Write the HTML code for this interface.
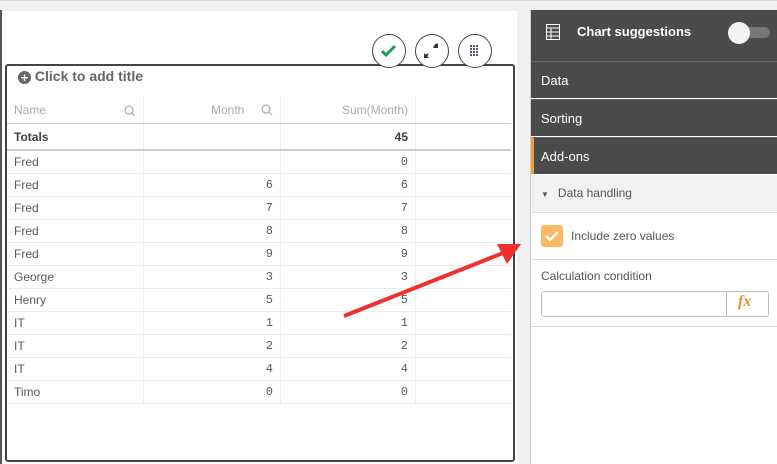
<!DOCTYPE html><html><head><style>
body{margin:0;width:777px;height:464px;overflow:hidden;background:#fff;font-family:"Liberation Sans",sans-serif;position:relative}
.a{position:absolute}
table{border-collapse:collapse;font-size:12px;color:#595959}
td{height:22px;border-bottom:1px solid #ececec;border-right:1px solid #ececec;padding:0 7px}
.n{text-align:right;font-family:"Liberation Mono",monospace;}
.nav{position:absolute;left:531px;width:246px;height:37px;border-top:1px solid #666;color:#fff;font-size:13px;line-height:37px;padding-left:10px;box-sizing:border-box;background:#4b4b4b}
.circ{position:absolute;top:34px;width:34px;height:34px;border:1.5px solid #444;border-radius:50%;background:#fff;box-sizing:border-box}
.mg{float:right;margin-top:2px}
</style></head><body>
<div class="a" style="left:0;top:0;width:777px;height:10px;background:#f0f0f0;border-top:1px solid #ddd"></div>
<div class="a" style="left:0;top:10px;width:2px;height:454px;background:#555"></div>
<div class="a" style="left:517px;top:10px;width:14px;height:454px;background:#f0f0f0"></div>
<div class="a" style="left:5px;top:64px;width:510px;height:398px;border:2px solid #444;border-radius:3px;box-sizing:border-box"></div>
<div class="a" style="left:18px;top:68px;font-size:14px;font-weight:bold;color:#666"><span style="display:inline-block;width:13px;height:13px;border-radius:50%;background:#666;color:#fff;text-align:center;line-height:13px;font-size:13px;vertical-align:-1px">+</span> Click to add title</div>
<div class="circ" style="left:372px"><svg width="31" height="31" viewBox="0 0 31 31"><path d="M9 16l4 4 9-9" stroke="#1a9e4a" stroke-width="3" fill="none"/></svg></div>
<div class="circ" style="left:415px"><svg width="31" height="31" viewBox="0 0 31 31"><path d="M12 19l-3 3M18 12l3-3" stroke="#333" stroke-width="2"/><path d="M8 18v5h5zM22 8v5h-5z" fill="#333"/></svg></div>
<div class="circ" style="left:458px"><svg width="31" height="31" viewBox="0 0 31 31" fill="#557"><g id="r"><rect x="11" y="10" width="2" height="2"/><rect x="14" y="10" width="2" height="2"/><rect x="17" y="10" width="2" height="2"/></g><use href="#r" y="3"/><use href="#r" y="6"/><use href="#r" y="9"/></svg></div>
<table class="a" style="left:7px;top:97px;width:504px">
<tr style="color:#aaa"><td style="width:122px;height:26px;border-bottom:1px solid #ccc">Name <svg class="mg" width="12" height="12"><circle cx="5" cy="5" r="4" stroke="#aaa" fill="none" stroke-width="1.2"/><path d="M8 8l3 3" stroke="#aaa" stroke-width="1.2"/></svg></td><td style="width:122px;text-align:right;border-bottom:1px solid #ccc">Month &nbsp;&nbsp;&nbsp; <svg width="12" height="12" style="vertical-align:-2px"><circle cx="5" cy="5" r="4" stroke="#aaa" fill="none" stroke-width="1.2"/><path d="M8 8l3 3" stroke="#aaa" stroke-width="1.2"/></svg></td><td style="width:120px;text-align:right;border-bottom:1px solid #ccc">Sum(Month)</td><td style="border-right:none;border-bottom:1px solid #ccc"></td></tr>
<tr style="font-weight:bold;color:#404040"><td style="height:25px;border-bottom:2px solid #ccc">Totals</td><td style="border-bottom:2px solid #ccc"></td><td style="text-align:right;border-bottom:2px solid #ccc">45</td><td style="border-right:none;border-bottom:2px solid #ccc"></td></tr>
<tr><td>Fred</td><td class="n"></td><td class="n">0</td><td style="border-right:none"></td></tr>
<tr><td>Fred</td><td class="n">6</td><td class="n">6</td><td style="border-right:none"></td></tr>
<tr><td>Fred</td><td class="n">7</td><td class="n">7</td><td style="border-right:none"></td></tr>
<tr><td>Fred</td><td class="n">8</td><td class="n">8</td><td style="border-right:none"></td></tr>
<tr><td>Fred</td><td class="n">9</td><td class="n">9</td><td style="border-right:none"></td></tr>
<tr><td>George</td><td class="n">3</td><td class="n">3</td><td style="border-right:none"></td></tr>
<tr><td>Henry</td><td class="n">5</td><td class="n">5</td><td style="border-right:none"></td></tr>
<tr><td>IT</td><td class="n">1</td><td class="n">1</td><td style="border-right:none"></td></tr>
<tr><td>IT</td><td class="n">2</td><td class="n">2</td><td style="border-right:none"></td></tr>
<tr><td>IT</td><td class="n">4</td><td class="n">4</td><td style="border-right:none"></td></tr>
<tr><td>Timo</td><td class="n">0</td><td class="n">0</td><td style="border-right:none"></td></tr>
</table>
<div class="a" style="left:530px;top:10px;width:247px;height:454px;border-left:1px solid #ccc;background:#fff"></div>
<div class="a" style="left:531px;top:10px;width:246px;height:52px;background:#4b4b4b"></div>
<svg class="a" style="left:546px;top:24px" width="14" height="16"><rect x="0.5" y="0.5" width="13" height="15" fill="none" stroke="#fff"/><path d="M0 4h14M0 8h14M0 12h14M5 4v12" stroke="#fff"/></svg>
<div class="a" style="left:577px;top:24px;color:#fff;font-weight:bold;font-size:13px">Chart suggestions</div>
<div class="a" style="left:738px;top:27px;width:32px;height:11px;border-radius:6px;background:#777"></div>
<div class="a" style="left:728px;top:22px;width:22px;height:22px;border-radius:50%;background:#f4f4f4"></div>
<div class="nav" style="top:61px">Data</div>
<div class="nav" style="top:99px">Sorting</div>
<div class="nav" style="top:137px;border-left:3px solid #f0a030;padding-left:7px">Add-ons</div>
<div class="a" style="left:531px;top:175px;width:246px;height:37px;background:#f2f2f2;border-bottom:1px solid #ddd;font-size:12px;color:#555;line-height:37px"><span style="font-size:8px;margin:0 9px 0 10px">&#9660;</span>Data handling</div>
<div class="a" style="left:541px;top:225px;width:22px;height:22px;border-radius:3px;background:#fbb964"><svg width="22" height="22"><path d="M5 11l4 4 8-8" stroke="#fff" stroke-width="2.5" fill="none"/></svg></div>
<div class="a" style="left:571px;top:229px;font-size:12px;color:#555">Include zero values</div>
<div class="a" style="left:531px;top:259px;width:246px;height:1px;background:#ddd"></div>
<div class="a" style="left:541px;top:269px;font-size:12px;color:#555">Calculation condition</div>
<div class="a" style="left:541px;top:291px;width:228px;height:26px;border:1px solid #bbb;border-radius:3px;box-sizing:border-box"></div>
<div class="a" style="left:726px;top:291px;width:1px;height:26px;background:#bbb"></div>
<div class="a" style="left:738px;top:293px;font-family:'Liberation Serif',serif;font-style:italic;font-weight:bold;color:#f08c28;font-size:16px">fx</div>
<div class="a" style="left:531px;top:326px;width:246px;height:1px;background:#ddd"></div>
<svg class="a" style="left:0;top:0" width="777" height="464"><path d="M344 316L503 253" stroke="#f03030" stroke-width="4"/><path d="M521 244L497 244L507 264Z" fill="#f03030"/></svg>
</body></html>
